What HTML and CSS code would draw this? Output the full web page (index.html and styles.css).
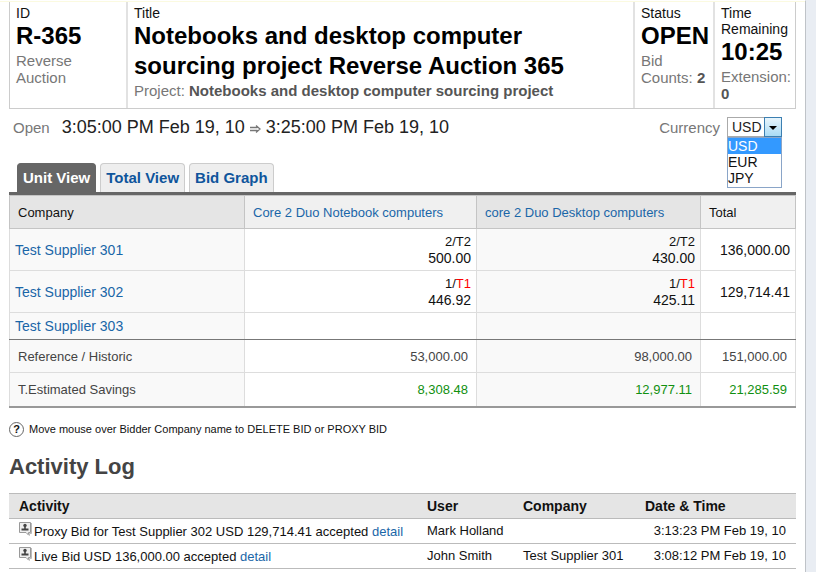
FILE: index.html
```html
<!DOCTYPE html>
<html lang="en">
<head>
    <meta charset="UTF-8">
    <meta name="viewport" content="width=device-width, initial-scale=1.0">
    <title>Reverse Auction R-365</title>
    <link rel="stylesheet" href="styles.css">
</head>
<body>
    <svg class="sprite" aria-hidden="true">
        <symbol id="bid-icon" viewBox="0 0 13 14">
            <path d="M.5 .5h11v10h-2v2.500L7 10.500H.5z" fill="#eee" stroke="#999"/>
            <path d="M12.500 1v10.500H10.500v2L8 11.500" fill="none" stroke="#bbb"/>
            <circle cx="6" cy="3.500" r="1.700" fill="#444"/>
            <path d="M5.200 5h1.600v1.500h2.700v2H2.500v-2h2.700z" fill="#444"/>
        </symbol>
    </svg>
    <div class="page">
        <div class="summary">
            <div class="box box-id">
                <div class="label">ID</div>
                <div class="big">R-365</div>
                <div class="note">Reverse Auction</div>
            </div>
            <div class="box box-title">
                <div class="label">Title</div>
                <h1 class="big">Notebooks and desktop computer<br>sourcing project Reverse Auction 365</h1>
                <div class="note">Project: <b>Notebooks and desktop computer sourcing project</b></div>
            </div>
            <div class="box box-status">
                <div class="label">Status</div>
                <div class="big">OPEN</div>
                <div class="note">Bid<br>Counts: <b>2</b></div>
            </div>
            <div class="box box-time">
                <div class="label">Time Remaining</div>
                <div class="big">10:25</div>
                <div class="note">Extension: <b>0</b></div>
            </div>
        </div>

        <div class="schedule">
            <span class="muted">Open</span>
            <span class="period">3:05:00 PM Feb 19, 10
                <svg class="arrow" viewBox="0 0 11 8" aria-hidden="true"><path d="M0 2.500h7.500M0 5.500h7.500M6 .5L10 4L6 7.500" fill="none" stroke="#777" stroke-width="1.300"/></svg>
                3:25:00 PM Feb 19, 10</span>
            <label class="muted" for="currency">Currency</label>
            <div class="currency">
                <select id="currency">
                    <option>USD</option>
                    <option>EUR</option>
                    <option>JPY</option>
                </select>
                <span class="drop"></span>
                <ul class="options">
                    <li class="selected">USD</li>
                    <li>EUR</li>
                    <li>JPY</li>
                </ul>
            </div>
        </div>

        <nav class="tabs">
            <a class="tab active" href="#unit">Unit View</a>
            <a class="tab" href="#total">Total View</a>
            <a class="tab" href="#graph">Bid Graph</a>
        </nav>

        <table class="bids" id="unit">
            <colgroup>
                <col class="col-company">
                <col>
                <col class="col-desktop">
                <col class="col-total">
            </colgroup>
            <thead>
                <tr>
                    <th>Company</th>
                    <th><a href="#notebook">Core 2 Duo Notebook computers</a></th>
                    <th><a href="#desktop">core 2 Duo Desktop computers</a></th>
                    <th>Total</th>
                </tr>
            </thead>
            <tbody>
                <tr class="bid">
                    <td><a href="#301">Test Supplier 301</a></td>
                    <td><div class="rank">2/T2</div>500.00</td>
                    <td><div class="rank">2/T2</div>430.00</td>
                    <td>136,000.00</td>
                </tr>
                <tr class="bid">
                    <td><a href="#302">Test Supplier 302</a></td>
                    <td><div class="rank">1/<span class="first">T1</span></div>446.92</td>
                    <td><div class="rank">1/<span class="first">T1</span></div>425.11</td>
                    <td>129,714.41</td>
                </tr>
                <tr class="bid empty">
                    <td><a href="#303">Test Supplier 303</a></td>
                    <td></td>
                    <td></td>
                    <td></td>
                </tr>
            </tbody>
            <tfoot>
                <tr>
                    <td>Reference / Historic</td>
                    <td>53,000.00</td>
                    <td>98,000.00</td>
                    <td>151,000.00</td>
                </tr>
                <tr class="savings">
                    <td>T.Estimated Savings</td>
                    <td>8,308.48</td>
                    <td>12,977.11</td>
                    <td>21,285.59</td>
                </tr>
            </tfoot>
        </table>

        <p class="hint"><span class="help">?</span>Move mouse over Bidder Company name to DELETE BID or PROXY BID</p>

        <h2>Activity Log</h2>
        <table class="log">
            <colgroup>
                <col>
                <col class="col-user">
                <col class="col-bidder">
                <col class="col-date">
            </colgroup>
            <thead>
                <tr>
                    <th>Activity</th>
                    <th>User</th>
                    <th>Company</th>
                    <th>Date &amp; Time</th>
                </tr>
            </thead>
            <tbody>
                <tr>
                    <td><svg class="icon" aria-hidden="true"><use href="#bid-icon"/></svg>Proxy Bid for Test Supplier 302 USD 129,714.41 accepted <a href="#proxy">detail</a></td>
                    <td>Mark Holland</td>
                    <td></td>
                    <td>3:13:23 PM Feb 19, 10</td>
                </tr>
                <tr>
                    <td><svg class="icon" aria-hidden="true"><use href="#bid-icon"/></svg>Live Bid USD 136,000.00 accepted <a href="#live">detail</a></td>
                    <td>John Smith</td>
                    <td>Test Supplier 301</td>
                    <td>3:08:12 PM Feb 19, 10</td>
                </tr>
            </tbody>
        </table>
    </div>
</body>
</html>
```
FILE: styles.css
```css
* {
    box-sizing: border-box;
}
body {
    margin: 0;
    font-family: Arial, "Liberation Sans", sans-serif;
    font-size: 14px;
    color: #111;
    background-color: #e9edf3;
}
a {
    color: #1a66a8;
    text-decoration: none;
}
.sprite {
    display: none;
}
.page {
    min-height: 100vh;
    margin-right: 10px;
    padding: 1px 9px 0;
    background-color: #fff;
    border-top: 1px solid #fff;
    border-right: 1px solid #bfc3c8;
    box-shadow: inset 0 1px #fbfae0;
}

/* auction summary */
.summary {
    display: flex;
    min-height: 107px;
    border: 1px solid #ccc;
    border-top: 0;
}
.box {
    padding: 3px 6px 0;
    border-right: 2px solid #e2e2e2;
    line-height: 16px;
}
.box:last-child {
    border-right: 0;
}
.box-id {
    width: 118px;
    padding-right: 40px;
}
.box-title {
    flex: 1;
}
.box-status,
.box-time {
    width: 80px;
    padding-right: 0;
}
.big {
    margin: 0;
    font-size: 24px;
    font-weight: bold;
    line-height: 30px;
    color: #000;
}
.note {
    margin-top: 1px;
    font-size: 15px;
    line-height: 17px;
    color: #777;
}
.note b {
    color: #555;
}

/* schedule and currency */
.schedule {
    display: flex;
    align-items: center;
    height: 36px;
    padding: 0 14px 0 4px;
}
.muted {
    font-size: 15px;
    color: #777;
}
.period {
    flex: 1;
    margin-left: 12px;
    font-size: 18px;
    color: #222;
}
.arrow {
    width: 11px;
    height: 8px;
}
.currency {
    position: relative;
    width: 55px;
    margin-left: 7px;
}
.currency select {
    display: block;
    width: 100%;
    height: 20px;
    padding: 0 4px;
    appearance: none;
    font: 14px Arial, "Liberation Sans", sans-serif;
    color: #222;
    background-color: #fff;
    border: 1px solid #aaa;
    border-radius: 0;
}
.drop {
    position: absolute;
    top: 0;
    right: 0;
    width: 18px;
    height: 20px;
    background: linear-gradient(#e8f5fc, #a9dbf5);
    border: 1px solid #3c7fb1;
    pointer-events: none;
}
.drop::after {
    content: "";
    position: absolute;
    top: 8px;
    left: 4px;
    border: 4px solid transparent;
    border-top-color: #000;
    border-bottom: 0;
}
.options {
    position: absolute;
    top: 20px;
    left: 0;
    width: 100%;
    margin: 0;
    padding: 0 0 1px;
    list-style: none;
    line-height: 16px;
    background-color: #fff;
    border: 1px solid #8aa5c8;
}
.options .selected {
    color: #fff;
    background-color: #3399ff;
}

/* view tabs */
.tabs {
    display: flex;
    gap: 4px;
    margin-top: 18px;
    padding-left: 8px;
    border-bottom: 3px solid #666;
}
.tab {
    height: 29px;
    padding: 0 5px;
    font-size: 15px;
    font-weight: bold;
    line-height: 27px;
    color: #0f559c;
    background-color: #eee;
    border: 1px solid #ccc;
    border-bottom: 0;
    border-radius: 4px 4px 0 0;
}
.tab.active {
    color: #fff;
    background-color: #666;
    border-color: #666;
}

/* bids */
table {
    width: 100%;
    table-layout: fixed;
    border-collapse: collapse;
}
.col-company {
    width: 235px;
}
.col-desktop {
    width: 224px;
}
.col-total {
    width: 95px;
}
.bids th {
    height: 33px;
    padding: 0 8px;
    font-size: 13px;
    font-weight: normal;
    text-align: left;
    background-color: #f0f0f0;
    border: 1px solid #c4c4c4;
}
.bids th:nth-child(odd) {
    background-color: #e5e5e5;
}
.bids td {
    height: 33px;
    padding: 0 8px;
    font-size: 13px;
    text-align: right;
    border: 1px solid #ddd;
}
.bids td:nth-child(odd) {
    background-color: #f9f9f9;
}
.bids td:first-child {
    text-align: left;
}
.bids .bid td {
    height: 42px;
    padding: 0 5px;
    font-size: 14px;
    line-height: 16px;
}
.bids .empty td {
    height: 27px;
    border-bottom-color: #777;
}
.rank {
    font-size: 13px;
}
.first {
    color: #f00;
}
.bids tfoot {
    color: #444;
}
.bids .savings td {
    height: 34px;
    border-bottom: 2px solid #999;
}
.bids .savings td:not(:first-child) {
    color: #109010;
}
.hint {
    display: flex;
    align-items: center;
    margin: 14px 0 16px;
    font-size: 11px;
}
.help {
    width: 15px;
    height: 15px;
    margin-right: 5px;
    font-weight: bold;
    line-height: 13px;
    text-align: center;
    border: 1px solid #666;
    border-radius: 50%;
}

/* activity log */
h2 {
    margin: 0 0 12px;
    font-size: 22px;
    line-height: 28px;
    color: #444;
}
.col-user {
    width: 96px;
}
.col-bidder {
    width: 122px;
}
.col-date {
    width: 161px;
}
.log th {
    height: 25px;
    padding: 0 10px;
    text-align: left;
    background-color: #e5e5e5;
    border-top: 1px solid #bbb;
    border-bottom: 1px solid #bbb;
}
.log td {
    height: 25px;
    padding: 0 10px;
    font-size: 13px;
    border-bottom: 1px solid #bbb;
    white-space: nowrap;
}
.log td:last-child {
    text-align: right;
}
.icon {
    width: 13px;
    height: 14px;
    margin-right: 2px;
}
```
